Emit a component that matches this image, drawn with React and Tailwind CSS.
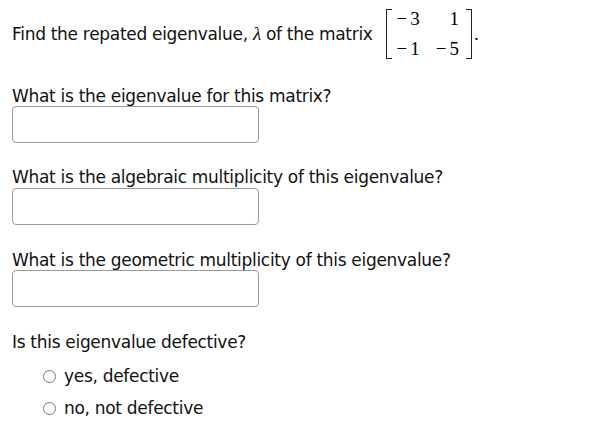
import React from 'react'

function Entry({ neg, value }) {
  return (
    <span className="flex justify-end">
      {neg ? <span className="mr-[3px]">−</span> : null}
      <span>{value}</span>
    </span>
  )
}

function Matrix() {
  return (
    <span className="ml-[13px] inline-flex h-[50px] items-center" style={{ fontFamily: '"Liberation Serif", serif' }}>
      <span className="h-[50px] w-[6px] border-y-[1.5px] border-l-[1.5px] border-[#222]" />
      <span className="-my-[5px] ml-[5px] grid grid-cols-[auto_auto] gap-x-[16px] text-[19px] leading-[30px] tracking-normal text-black">
        <Entry neg value="3" />
        <Entry value="1" />
        <Entry neg value="1" />
        <Entry neg value="5" />
      </span>
      <span className="ml-[7px] h-[50px] w-[6px] border-y-[1.5px] border-r-[1.5px] border-[#222]" />
      <span className="ml-[2px] text-[19px]">.</span>
    </span>
  )
}

function AnswerBox() {
  return <div className="h-[37px] w-[247px] rounded-[4px] border border-[#9a9a9a] bg-white" />
}

function Radio({ label }) {
  return (
    <label className="flex h-[18px] items-center gap-[8px] pl-[31px]">
      <span className="h-[13px] w-[13px] rounded-full border border-[#767676] bg-white" />
      <span>{label}</span>
    </label>
  )
}

export default function App() {
  return (
    <div
      className="h-[426px] w-[611px] overflow-hidden bg-white px-[12px] text-[17px] leading-[18px] tracking-[-0.3px] text-[#111]"
      style={{ fontFamily: '"DejaVu Sans", sans-serif' }}
    >
      <div className="flex h-[59px] items-center pt-[9px]">
        <span>
          Find the repated eigenvalue,{' '}
          <span className="text-[19px]" style={{ fontFamily: '"Liberation Serif", serif', fontStyle: 'italic' }}>
            λ
          </span>{' '}
          of the matrix
        </span>
        <Matrix />
      </div>

      <div className="mt-[28px]">What is the eigenvalue for this matrix?</div>
      <div className="mt-[1px]">
        <AnswerBox />
      </div>

      <div className="mt-[25px]">What is the algebraic multiplicity of this eigenvalue?</div>
      <div className="mt-[2px]">
        <AnswerBox />
      </div>

      <div className="mt-[26px]">What is the geometric multiplicity of this eigenvalue?</div>
      <div className="mt-[1px]">
        <AnswerBox />
      </div>

      <div className="mt-[26px]">Is this eigenvalue defective?</div>
      <div className="mt-[16px] flex flex-col gap-[14px]">
        <Radio label="yes, defective" />
        <Radio label="no, not defective" />
      </div>
    </div>
  )
}
